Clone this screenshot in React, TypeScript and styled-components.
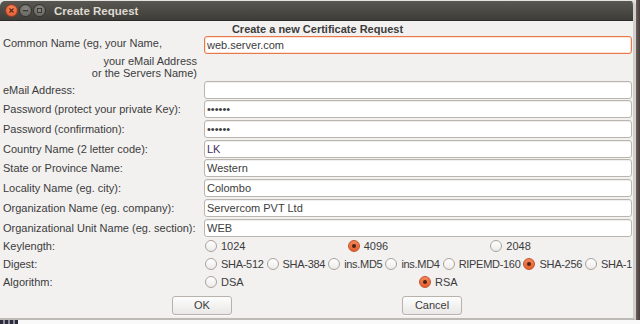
import React from 'react';
import styled, { createGlobalStyle } from 'styled-components';

const GlobalStyle = createGlobalStyle`
  html, body { margin: 0; padding: 0; background: #f7f7f7; }
  body { font-family: "Liberation Sans", Arial, sans-serif; color: #3c3c3c; }
`;

// Desktop behind the dialog
const Screen = styled.div`
  width: 640px;
  height: 324px;
  overflow: hidden;
  display: grid;
  grid-template-columns: 636px 4px;
  grid-template-rows: 320px 4px;
  background: #e6e4e1;
`;
const DarkEdge = styled.div`
  background: linear-gradient(90deg, #6b605c, #463c39);
`;
const BottomStrip = styled.div`
  grid-column: 1 / span 2;
  background: #f9f9f9;
  display: flex;
`;
const DesktopIcon = styled.div`
  width: 18px;
  height: 4px;
  background: repeating-linear-gradient(90deg, #2c2b3a 0 3px, #8c8aa0 3px 5px);
`;

// Window chrome
const Window = styled.div`
  margin-top: 1px;
  display: flex;
  flex-direction: column;
  background: #f2f1f0;
  border-right: 3px solid #d2cfcb;
  border-bottom: 2px solid #bdb9b4;
  border-radius: 5px 5px 0 0;
  overflow: hidden;
`;
const TitleBar = styled.div`
  height: 19px;
  flex: none;
  display: flex;
  align-items: center;
  padding-left: 6px;
  gap: 3px;
  background: linear-gradient(#5a5852, #3d3c38);
  border-bottom: 1px solid #2c2b28;
`;
const WinButton = styled.span<{ $close?: boolean }>`
  width: 11px;
  height: 11px;
  border-radius: 50%;
  display: flex;
  align-items: center;
  justify-content: center;
  background: ${({ $close }) =>
    $close ? 'radial-gradient(circle at 50% 35%, #f88a5c, #e0522a)' : 'radial-gradient(circle at 50% 35%, #8a8882, #5f5d58)'};
  box-shadow: 0 0 0 1px ${({ $close }) => ($close ? '#9d3b1e' : '#34332f')};
  svg { display: block; }
`;
const Title = styled.span`
  margin-left: 6px;
  font-size: 11.5px;
  font-weight: bold;
  color: #dfdbd2;
`;

// Dialog contents
const Body = styled.div`
  flex: 1;
  padding: 1px 1px 0 3px;
`;
const Heading = styled.div`
  text-align: center;
  font-size: 11px;
  font-weight: bold;
  line-height: 14px;
`;
const Form = styled.div`
  display: grid;
  grid-template-columns: 201px 1fr;
  row-gap: 1.7px;
  align-items: center;
`;
const Label = styled.div`
  font-size: 11px;
  line-height: 14px;
  white-space: nowrap;
`;
const TopLabel = styled(Label)`
  align-self: start;
`;
const LabelNote = styled.div`
  margin-top: 5px;
  padding-right: 7px;
  line-height: 12px;
  text-align: right;
`;
const Field = styled.input<{ $focused?: boolean; $top?: boolean; $tint?: string }>`
  box-sizing: border-box;
  width: 100%;
  height: 18px;
  margin: 0;
  padding: 0 2px;
  align-self: ${({ $top }) => ($top ? 'start' : 'center')};
  font-family: "Liberation Sans", Arial, sans-serif;
  font-size: 11px;
  color: ${({ $tint }) => $tint || '#3c3c3c'};
  background: #fff;
  border: 1px solid ${({ $focused }) => ($focused ? '#e9784a' : '#bab5af')};
  border-radius: 3px;
  box-shadow: ${({ $focused }) =>
    $focused ? 'inset 0 0 0 1px #fbe3d6' : 'inset 0 1px 1px rgba(0,0,0,0.07)'};
  outline: none;
`;
const Choices = styled.div<{ $cols?: number; $tight?: boolean }>`
  height: 16px;
  display: ${({ $cols }) => ($cols ? 'grid' : 'flex')};
  grid-template-columns: ${({ $cols }) => ($cols ? `repeat(${$cols}, 1fr)` : 'none')};
  justify-content: space-between;
  align-items: center;
  letter-spacing: ${({ $tight }) => ($tight ? '-0.3px' : 'normal')};
`;
const Choice = styled.label`
  display: flex;
  align-items: center;
  gap: 4px;
  padding-left: 1px;
  font-size: 11px;
  white-space: nowrap;
`;
const RadioDot = styled.span<{ $on?: boolean }>`
  box-sizing: border-box;
  flex: none;
  width: 12px;
  height: 12px;
  border-radius: 50%;
  display: flex;
  align-items: center;
  justify-content: center;
  border: 1px solid ${({ $on }) => ($on ? '#c4532a' : '#a8a39c')};
  background: ${({ $on }) =>
    $on ? 'linear-gradient(#f58557, #e3602f)' : 'linear-gradient(#ffffff, #ecebe9)'};
  &::after {
    content: '';
    width: 4px;
    height: 4px;
    border-radius: 50%;
    background: #4a2516;
    display: ${({ $on }) => ($on ? 'block' : 'none')};
  }
`;
const ButtonRow = styled.div`
  margin-top: 6.3px;
  display: flex;
  padding-left: 169px;
  gap: 170px;
`;
const Button = styled.button`
  width: 60px;
  height: 19px;
  padding: 0;
  font-family: "Liberation Sans", Arial, sans-serif;
  font-size: 11px;
  color: #3c3c3c;
  background: linear-gradient(#fdfdfd, #e9e8e6);
  border: 1px solid #b7b2ac;
  border-radius: 3px;
  box-shadow: 0 1px 0 rgba(255,255,255,0.7);
`;

const fields: { label: string; value: string; tint?: string }[] = [
  { label: 'eMail Address:', value: '' },
  { label: 'Password (protect your private Key):', value: '••••••' },
  { label: 'Password (confirmation):', value: '••••••' },
  { label: 'Country Name (2 letter code):', value: 'LK', tint: '#45305a' },
  { label: 'State or Province Name:', value: 'Western' },
  { label: 'Locality Name (eg. city):', value: 'Colombo' },
  { label: 'Organization Name (eg. company):', value: 'Servercom PVT Ltd' },
  { label: 'Organizational Unit Name (eg. section):', value: 'WEB' },
];

const keylengths = [
  { name: '1024', on: false },
  { name: '4096', on: true },
  { name: '2048', on: false },
];
const digests = ['SHA-512', 'SHA-384', 'ins.MD5', 'ins.MD4', 'RIPEMD-160', 'SHA-256', 'SHA-1'];
const algorithms = [
  { name: 'DSA', on: false },
  { name: 'RSA', on: true },
];

function Radio({ name, on }: { name: string; on?: boolean }) {
  return (
    <Choice>
      <RadioDot $on={on} />
      {name}
    </Choice>
  );
}

export default function App() {
  return (
    <>
      <GlobalStyle />
      <Screen>
        <Window>
          <TitleBar>
            <WinButton $close>
              <svg width="5" height="5" viewBox="0 0 5 5">
                <path d="M0.5 0.5 L4.5 4.5 M4.5 0.5 L0.5 4.5" stroke="#5a2010" strokeWidth="1.2" />
              </svg>
            </WinButton>
            <WinButton>
              <svg width="5" height="2" viewBox="0 0 5 2">
                <rect width="5" height="1.4" fill="#3a3935" />
              </svg>
            </WinButton>
            <WinButton>
              <svg width="5" height="5" viewBox="0 0 5 5">
                <rect x="0.5" y="0.5" width="4" height="4" fill="none" stroke="#3a3935" strokeWidth="1" />
              </svg>
            </WinButton>
            <Title>Create Request</Title>
          </TitleBar>
          <Body>
            <Heading>Create a new Certificate Request</Heading>
            <Form>
              <TopLabel>
                Common Name (eg, your Name,
                <LabelNote>
                  your eMail Address
                  <br />
                  or the Servers Name)
                </LabelNote>
              </TopLabel>
              <Field $focused $top readOnly defaultValue="web.server.com" />
              {fields.map((f) => (
                <React.Fragment key={f.label}>
                  <Label>{f.label}</Label>
                  <Field readOnly defaultValue={f.value} $tint={f.tint} />
                </React.Fragment>
              ))}
              <Label>Keylength:</Label>
              <Choices $cols={3}>
                {keylengths.map((k) => (
                  <Radio key={k.name} name={k.name} on={k.on} />
                ))}
              </Choices>
              <Label>Digest:</Label>
              <Choices $tight>
                {digests.map((d) => (
                  <Radio key={d} name={d} on={d === 'SHA-256'} />
                ))}
              </Choices>
              <Label>Algorithm:</Label>
              <Choices $cols={2}>
                {algorithms.map((a) => (
                  <Radio key={a.name} name={a.name} on={a.on} />
                ))}
              </Choices>
            </Form>
            <ButtonRow>
              <Button>OK</Button>
              <Button>Cancel</Button>
            </ButtonRow>
          </Body>
        </Window>
        <DarkEdge />
        <BottomStrip>
          <DesktopIcon />
        </BottomStrip>
      </Screen>
    </>
  );
}
